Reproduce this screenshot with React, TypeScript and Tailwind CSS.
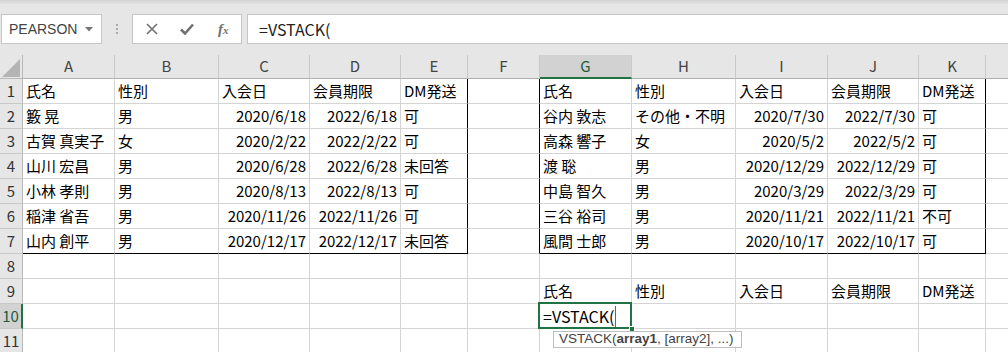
import React from 'react';

const cols = [
  { k: 'A', w: 'w-[92px]' },
  { k: 'B', w: 'w-[104px]' },
  { k: 'C', w: 'w-[91px]' },
  { k: 'D', w: 'w-[91px]' },
  { k: 'E', w: 'w-[67px]' },
  { k: 'F', w: 'w-[72px]' },
  { k: 'G', w: 'w-[92px]' },
  { k: 'H', w: 'w-[104px]' },
  { k: 'I', w: 'w-[92px]' },
  { k: 'J', w: 'w-[91px]' },
  { k: 'K', w: 'w-[67px]' },
  { k: '', w: 'w-[91px]' },
];

const hdr = ['氏名', '性別', '入会日', '会員期限', 'DM発送'];

const rows: string[][] = [
  [...hdr, '', ...hdr, ''],
  ['籔 晃', '男', '2020/6/18', '2022/6/18', '可', '', '谷内 敦志', 'その他・不明', '2020/7/30', '2022/7/30', '可', ''],
  ['古賀 真実子', '女', '2020/2/22', '2022/2/22', '可', '', '高森 響子', '女', '2020/5/2', '2022/5/2', '可', ''],
  ['山川 宏昌', '男', '2020/6/28', '2022/6/28', '未回答', '', '渡 聡', '男', '2020/12/29', '2022/12/29', '可', ''],
  ['小林 孝則', '男', '2020/8/13', '2022/8/13', '可', '', '中島 智久', '男', '2020/3/29', '2022/3/29', '可', ''],
  ['稲津 省吾', '男', '2020/11/26', '2022/11/26', '可', '', '三谷 裕司', '男', '2020/11/21', '2022/11/21', '不可', ''],
  ['山内 創平', '男', '2020/12/17', '2022/12/17', '未回答', '', '風間 士郎', '男', '2020/10/17', '2022/10/17', '可', ''],
  ['', '', '', '', '', '', '', '', '', '', '', ''],
  ['', '', '', '', '', '', ...hdr, ''],
  ['', '', '', '', '', '', '', '', '', '', '', ''],
  ['', '', '', '', '', '', '', '', '', '', '', ''],
];

function Cell({ r, ci, v }: { r: number; ci: number; v: string }) {
  const inTable = r <= 7;
  const rightBlack = inTable && (ci === 4 || ci === 5 || ci === 10);
  const bottomBlack = r === 7 && ci !== 5 && ci !== 11;
  const num = /^\d/.test(v);
  const active = r === 10 && ci === 6;
  return (
    <div
      className={`${cols[ci].w} relative flex h-full shrink-0 items-center border-r border-b px-[3px] text-[15px] text-black whitespace-nowrap ${
        rightBlack ? 'border-r-black' : 'border-r-[#d4d4d4]'
      } ${bottomBlack ? 'border-b-black' : 'border-b-[#d4d4d4]'} ${num ? 'justify-end' : 'justify-start'}`}
    >
      {v}
      {active && (
        <>
          <div className="absolute -top-[2px] -left-[2px] z-10 h-[calc(100%+3px)] w-[calc(100%+3px)] border-2 border-[#217346]" />
          <div className="absolute -right-[4px] -bottom-[4px] z-20 h-[6px] w-[6px] border border-white bg-[#217346]" />
          <span className="relative z-10 flex items-center text-[16px]">
            =VSTACK(
            <span className="ml-[1px] inline-block h-[21px] w-px bg-[#666]" />
          </span>
          <div className="absolute top-[27px] left-[13px] z-30 flex h-[17px] w-[189px] items-center border border-[#bfbfbf] bg-white px-[5px] font-['Liberation_Sans',sans-serif] text-[13.5px] text-[#444]">
            VSTACK(<b className="font-bold">array1</b>, [array2], ...)
          </div>
        </>
      )}
    </div>
  );
}

export default function App() {
  return (
    <div className="h-[352px] w-[1008px] overflow-hidden bg-[#e6e6e6] font-['Noto_Sans_CJK_JP','Noto_Sans',sans-serif]">
      <div className="h-[4px] bg-gradient-to-b from-[#d2d2d2] to-[#e2e2e2]" />
      {/* formula bar */}
      <div className="mt-[10px] mb-[11px] flex h-[30px] items-stretch">
        <div className="ml-[1px] flex w-[101px] items-center justify-between border border-[#c6c6c6] bg-white pr-[8px] pl-[7px]">
          <span className="font-['Liberation_Sans',sans-serif] text-[14px] text-[#444]">PEARSON</span>
          <svg width="8" height="5" viewBox="0 0 8 5">
            <polygon points="0,0 8,0 4,4.5" fill="#777" />
          </svg>
        </div>
        <div className="flex w-[30px] flex-col items-center justify-center gap-[2px]">
          <span className="h-[2px] w-[2px] bg-[#a8a8a8]" />
          <span className="h-[2px] w-[2px] bg-[#a8a8a8]" />
          <span className="h-[2px] w-[2px] bg-[#a8a8a8]" />
        </div>
        <div className="flex w-[110px] items-center border border-[#c6c6c6] bg-white">
          <svg className="ml-[13px]" width="12" height="12" viewBox="0 0 12 12">
            <path d="M1 1 L11 11 M11 1 L1 11" stroke="#707070" strokeWidth="1.6" />
          </svg>
          <svg className="ml-[22px]" width="14" height="12" viewBox="0 0 14 12">
            <path d="M1 6.5 L5 10.5 L13 1.5" stroke="#707070" strokeWidth="2.6" fill="none" />
          </svg>
          <span className="ml-[24px] font-['Liberation_Serif',serif] text-[15px] font-bold text-[#707070] italic">
            f<span className="text-[11px]">x</span>
          </span>
        </div>
        <div className="ml-[5px] flex flex-1 items-center border border-r-0 border-[#c6c6c6] bg-white pl-[11px] text-[16px] text-[#222]">
          =VSTACK(
        </div>
      </div>

      {/* column headers */}
      <div className="flex h-[24px] text-[15px] text-[#444]">
        <div className="flex h-full w-[23px] shrink-0 items-end justify-end border-r border-b border-[#b8b8b8] pr-[2px] pb-[1px]">
          <svg width="18" height="18" viewBox="0 0 18 18">
            <polygon points="18,0 18,18 0,18" fill="#b4b4b4" />
          </svg>
        </div>
        {cols.map((c) =>
          c.k === 'G' ? (
            <div
              key="G"
              className={`${c.w} flex h-full shrink-0 items-center justify-center border-r border-b-2 border-r-[#c8c8c8] border-b-[#217346] bg-[#d2d2d2] text-[#215a3a]`}
            >
              {c.k}
            </div>
          ) : (
            <div
              key={c.k || 'L'}
              className={`${c.w} flex h-full shrink-0 items-center justify-center border-r border-b border-r-[#c8c8c8] border-b-[#b0b0b0]`}
            >
              {c.k}
            </div>
          )
        )}
      </div>

      {/* rows */}
      {rows.map((row, i) => {
        const r = i + 1;
        const sel = r === 10;
        return (
          <div key={r} className="flex h-[25px] bg-white">
            <div
              className={`flex h-full w-[23px] shrink-0 items-center justify-center border-b border-b-[#c8c8c8] text-[15px] ${
                sel
                  ? 'border-r-2 border-r-[#217346] bg-[#d2d2d2] text-[#215a3a]'
                  : 'border-r border-r-[#b8b8b8] bg-[#e6e6e6] text-[#333]'
              }`}
            >
              {r}
            </div>
            {row.map((v, ci) => (
              <Cell key={ci} r={r} ci={ci} v={v} />
            ))}
          </div>
        );
      })}
    </div>
  );
}
